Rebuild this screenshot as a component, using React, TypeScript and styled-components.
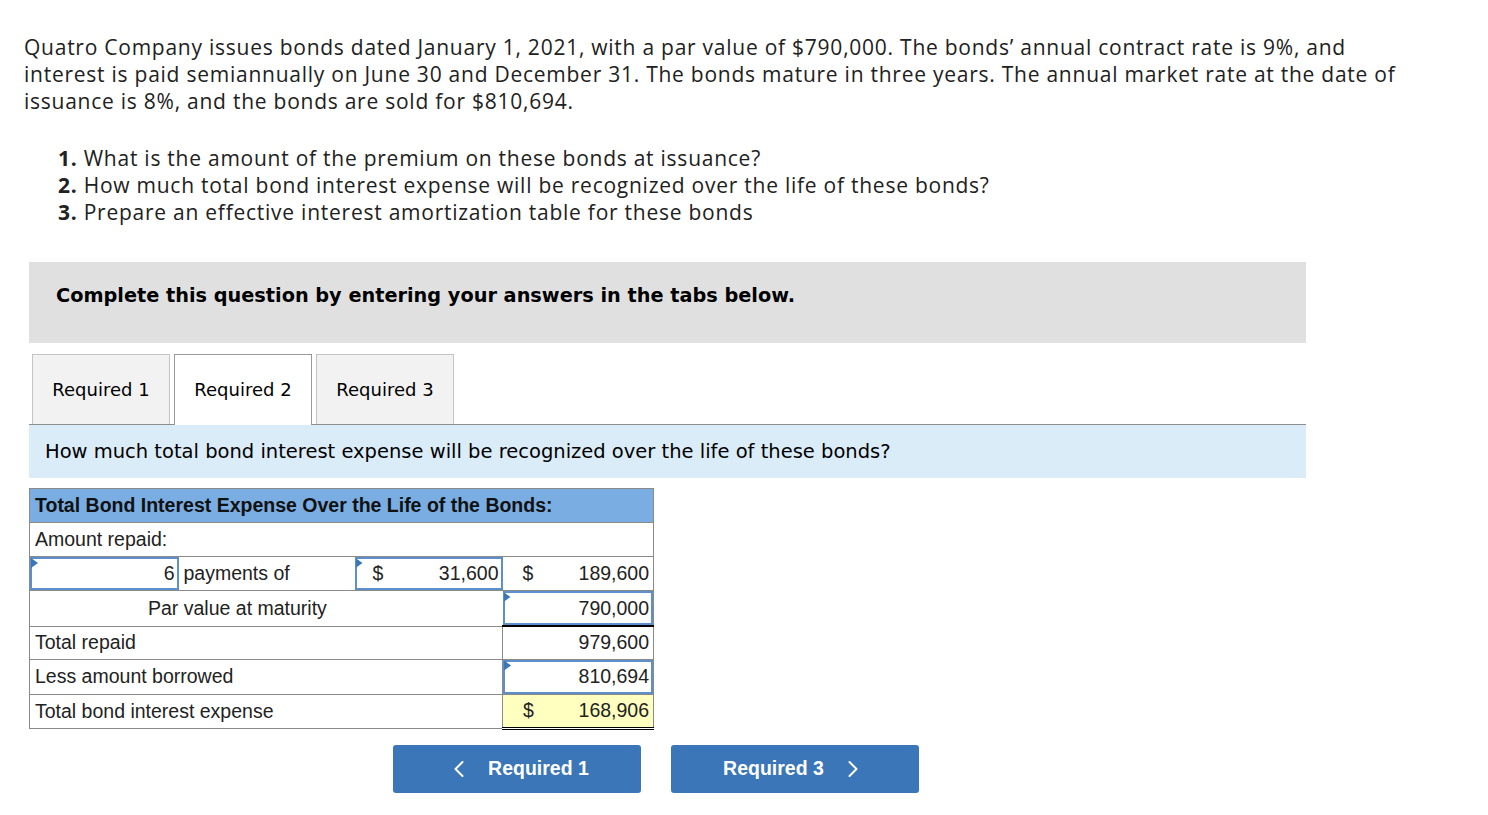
import styled, { createGlobalStyle } from "styled-components";
import { ChevronLeft, ChevronRight } from "lucide-react";

const GlobalStyle = createGlobalStyle`
  html, body {
    margin: 0;
    padding: 0;
    background: #fff;
  }
  body {
    font-family: "Open Sans", "Liberation Sans", sans-serif;
    color: #212121;
  }
`;

const Page = styled.div`
  width: 1488px;
  min-height: 815px;
  padding: 34px 0 0 0;
  box-sizing: border-box;
`;

const Intro = styled.p`
  margin: 0 0 0 24px;
  font-size: 21px;
  line-height: 27px;
  letter-spacing: 0.75px;
  white-space: nowrap;
`;

const Steps = styled.ol`
  list-style: none;
  margin: 30px 0 0 58px;
  padding: 0;
  font-size: 21px;
  line-height: 27px;
  letter-spacing: 0.75px;
`;

const StepNo = styled.b`
  font-weight: 700;
`;

const Work = styled.div`
  margin: 36px 0 0 29px;
  width: 1277px;
  font-family: "DejaVu Sans", Verdana, sans-serif;
  color: #000;
`;

const Banner = styled.div`
  height: 81px;
  box-sizing: border-box;
  background: #e0e0e0;
  padding: 22px 27px;
  font-size: 19.3px;
  font-weight: 700;
  line-height: 24px;
`;

const TabRow = styled.div`
  display: flex;
  gap: 4px;
  margin-top: 11px;
  padding-left: 3px;
  border-bottom: 1px solid #8e8e8e;
`;

const Tab = styled.div<{ $active?: boolean }>`
  width: 138px;
  box-sizing: border-box;
  display: flex;
  align-items: center;
  justify-content: center;
  font-size: 18px;
  background: ${(p) => (p.$active ? "#fff" : "#f2f2f2")};
  border: 1px solid ${(p) => (p.$active ? "#999" : "#c4c4c4")};
  border-bottom: none;
  margin-bottom: ${(p) => (p.$active ? "-1px" : "0")};
  padding-bottom: ${(p) => (p.$active ? "1px" : "0")};
  height: ${(p) => (p.$active ? "71px" : "70px")};
`;

const Question = styled.div`
  height: 53px;
  box-sizing: border-box;
  background: #dbecf9;
  padding: 0 16px;
  display: flex;
  align-items: center;
  font-size: 19.5px;
`;

const Sheet = styled.table`
  margin-top: 10px;
  border-collapse: collapse;
  table-layout: fixed;
  width: 625px;
  font-family: "Liberation Sans", Arial, sans-serif;
  font-size: 19.5px;
  color: #222;
  border: 1px solid #8a8a8a;
`;

const Col = styled.col<{ $w: number }>`
  width: ${(p) => p.$w}px;
`;

const HeadCell = styled.th`
  background: #7aade2;
  text-align: left;
  font-weight: 700;
  height: 33px;
  padding: 0 5px;
  border-bottom: 1px solid #8a8a8a;
  color: #111;
`;

const Row = styled.tr<{ $h: number }>`
  --h: ${(p) => p.$h}px;
`;

const Cell = styled.td<{ $align?: string; $pad?: number; $right?: boolean }>`
  height: var(--h);
  padding: 0 ${(p) => (p.$align === "right" ? 4 : 0)}px 0 ${(p) => p.$pad ?? 5}px;
  text-align: ${(p) => p.$align ?? "left"};
  border-bottom: 1px solid #8a8a8a;
  border-right: ${(p) => (p.$right ? "1px solid #8a8a8a" : "none")};
  white-space: nowrap;
  box-sizing: border-box;
`;

const EntryCell = styled.td<{ $bottom?: string }>`
  padding: 0;
  border-bottom: ${(p) => p.$bottom ?? "1px solid #8a8a8a"};
`;

const Entry = styled.div<{ $end?: boolean }>`
  position: relative;
  height: var(--h);
  box-sizing: border-box;
  border: 2px solid #5d8fcd;
  background: #fff;
  display: flex;
  align-items: center;
  justify-content: ${(p) => (p.$end ? "flex-end" : "space-between")};
  padding: 0 2px 0 16px;
  &::before {
    content: "";
    position: absolute;
    left: -1px;
    top: -1px;
    width: 7px;
    height: 10px;
    background: #3a76b8;
    clip-path: polygon(0 0, 100% 50%, 0 100%);
  }
`;

const Money = styled.div<{ $fill?: string; $cut?: number }>`
  height: calc(var(--h) - ${(p) => p.$cut ?? 0}px);
  box-sizing: border-box;
  display: flex;
  align-items: center;
  justify-content: space-between;
  padding: 0 4px 0 20px;
  background: ${(p) => p.$fill ?? "transparent"};
`;

const Total = styled.td`
  padding: 0;
  border-left: 1px solid #8a8a8a;
  border-bottom: 3px double #000;
`;

const Nav = styled.div`
  display: flex;
  gap: 30px;
  margin: 15px 0 0 393px;
`;

const NavButton = styled.button`
  width: 248px;
  height: 48px;
  border: none;
  border-radius: 3px;
  background: #3a76b8;
  color: #fff;
  font-family: "Liberation Sans", Arial, sans-serif;
  font-size: 19.5px;
  font-weight: 700;
  display: flex;
  align-items: center;
  justify-content: center;
  gap: 15px;
  cursor: pointer;
`;

export default function App() {
  return (
    <>
      <GlobalStyle />
      <Page>
        <Intro>
          Quatro Company issues bonds dated January 1, 2021, with a par value of $790,000. The bonds’ annual contract
          rate is 9%, and
          <br />
          interest is paid semiannually on June 30 and December 31. The bonds mature in three years. The annual market
          rate at the date of
          <br />
          issuance is 8%, and the bonds are sold for $810,694.
        </Intro>
        <Steps>
          <li>
            <StepNo>1.</StepNo> What is the amount of the premium on these bonds at issuance?
          </li>
          <li>
            <StepNo>2.</StepNo> How much total bond interest expense will be recognized over the life of these bonds?
          </li>
          <li>
            <StepNo>3.</StepNo> Prepare an effective interest amortization table for these bonds
          </li>
        </Steps>

        <Work>
          <Banner>Complete this question by entering your answers in the tabs below.</Banner>
          <TabRow>
            <Tab>Required 1</Tab>
            <Tab $active>Required 2</Tab>
            <Tab>Required 3</Tab>
          </TabRow>
          <Question>How much total bond interest expense will be recognized over the life of these bonds?</Question>

          <Sheet>
            <colgroup>
              <Col $w={149} />
              <Col $w={176} />
              <Col $w={148} />
              <Col $w={151} />
            </colgroup>
            <thead>
              <tr>
                <HeadCell colSpan={4}>Total Bond Interest Expense Over the Life of the Bonds:</HeadCell>
              </tr>
            </thead>
            <tbody>
              <Row $h={34}>
                <Cell colSpan={4}>Amount repaid:</Cell>
              </Row>
              <Row $h={33}>
                <EntryCell>
                  <Entry $end>6</Entry>
                </EntryCell>
                <Cell>payments of</Cell>
                <EntryCell>
                  <Entry>
                    <span>$</span>
                    <span>31,600</span>
                  </Entry>
                </EntryCell>
                <EntryCell>
                  <Money>
                    <span>$</span>
                    <span>189,600</span>
                  </Money>
                </EntryCell>
              </Row>
              <Row $h={34}>
                <Cell colSpan={3} $pad={118}>
                  Par value at maturity
                </Cell>
                <EntryCell $bottom="2px solid #000">
                  <Entry $end>790,000</Entry>
                </EntryCell>
              </Row>
              <Row $h={33}>
                <Cell colSpan={3} $right>
                  Total repaid
                </Cell>
                <Cell $align="right">979,600</Cell>
              </Row>
              <Row $h={34}>
                <Cell colSpan={3} $right>
                  Less amount borrowed
                </Cell>
                <EntryCell>
                  <Entry $end>810,694</Entry>
                </EntryCell>
              </Row>
              <Row $h={34}>
                <Cell colSpan={3}>Total bond interest expense</Cell>
                <Total>
                  <Money $fill="#ffffbf" $cut={2}>
                    <span>$</span>
                    <span>168,906</span>
                  </Money>
                </Total>
              </Row>
            </tbody>
          </Sheet>
        </Work>

        <Nav>
          <NavButton>
            <ChevronLeft size={28} strokeWidth={1.7} />
            Required 1
          </NavButton>
          <NavButton>
            Required 3
            <ChevronRight size={28} strokeWidth={1.7} />
          </NavButton>
        </Nav>
      </Page>
    </>
  );
}
